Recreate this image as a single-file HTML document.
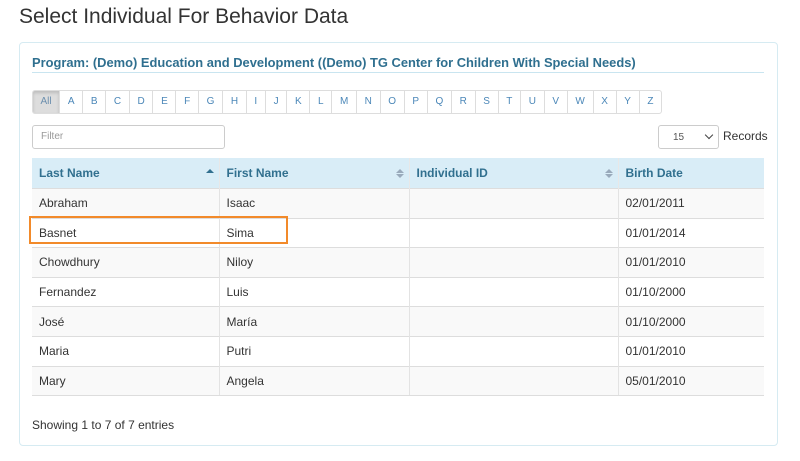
<!DOCTYPE html>
<html><head><meta charset="utf-8"><style>
body{margin:0;width:800px;height:461px;background:#fff;font-family:"Liberation Sans",Arial,sans-serif;color:#333;position:relative;overflow:hidden}
h1{position:absolute;left:19px;top:5px;margin:0;font-weight:normal;font-size:21px;color:#333}
.panel{position:absolute;left:19px;top:42px;width:757px;height:402px;border:1px solid #d6ebf2;border-radius:4px}
.ph{position:absolute;left:12px;top:12px;width:732px;height:17px;border-bottom:1px solid #c9e5f0;font-size:12.9px;font-weight:bold;color:#2f6f8f;white-space:nowrap}
.alpha{position:absolute;left:12px;top:47px;display:flex;height:22px;border:1px solid #ddd;border-radius:3px;overflow:hidden}
.alpha span{display:block;padding:0 7.7px;line-height:22px;font-size:10px;color:#4b87b8;border-left:1px solid #ddd}
.alpha span:first-child{border-left:none;background:#ddd;color:#6c8fae;box-shadow:inset 0 2px 3px rgba(0,0,0,.15);padding:0 7.5px}
.filter{position:absolute;left:12px;top:82px;width:183px;height:22px;border:1px solid #ccc;border-radius:3px;font-size:10px;color:#999;line-height:22px;padding-left:8px}
.sel{position:absolute;left:638px;top:82px;width:59px;height:22px;border:1px solid #ccc;border-radius:3px;font-size:10px;line-height:23px;color:#555}
.sel b{position:absolute;left:14px;font-weight:normal}
.sel i{position:absolute;right:6px;top:6px;width:5px;height:5px;border-right:1.5px solid #444;border-bottom:1.5px solid #444;transform:rotate(45deg)}
.rec{position:absolute;left:703px;top:86px;font-size:12px;color:#333}
table{position:absolute;left:12px;top:115px;border-collapse:collapse;font-size:12px;table-layout:fixed;width:732px}
th{background:#d9edf7;color:#31708f;text-align:left;height:30px;padding:0 7px;border-left:1px solid #e8e8e8;position:relative;font-weight:bold}
td{height:28.6px;padding:0 7px;border-left:1px solid #e3e3e3;border-top:1px solid #ddd;color:#333}
tr>*:first-child{border-left:none}
tbody tr:nth-child(odd) td{background:#f9f9f9}
tbody tr:last-child td{border-bottom:1px solid #ddd}
.s{position:absolute;right:9px;top:11px;width:0;height:0}
.s:before,.s:after{content:"";position:absolute;left:-4px;border-left:4px solid transparent;border-right:4px solid transparent}
.s:before{top:0;border-bottom:4px solid #9ab}
.s:after{top:5px;border-top:4px solid #9ab}
.up:before{border-bottom-color:#31708f}.up:after{display:none}
.hl{position:absolute;left:29px;top:216px;width:255px;height:24px;border:2px solid #f28a2a}
.show{position:absolute;left:12px;top:375px;font-size:12px}
</style></head><body>
<h1>Select Individual For Behavior Data</h1>
<div class="panel">
<div class="ph">Program: (Demo) Education and Development ((Demo) TG Center for Children With Special Needs)</div>
<div class="alpha"><span>All</span><span>A</span><span>B</span><span>C</span><span>D</span><span>E</span><span>F</span><span>G</span><span>H</span><span>I</span><span>J</span><span>K</span><span>L</span><span>M</span><span>N</span><span>O</span><span>P</span><span>Q</span><span>R</span><span>S</span><span>T</span><span>U</span><span>V</span><span>W</span><span>X</span><span>Y</span><span>Z</span></div>
<div class="filter">Filter</div>
<div class="sel"><b>15</b><i></i></div>
<div class="rec">Records</div>
<table>
<colgroup><col style="width:187px"><col style="width:190px"><col style="width:209px"><col style="width:146px"></colgroup>
<thead><tr><th>Last Name<span class="s up"></span></th><th>First Name<span class="s"></span></th><th>Individual ID<span class="s"></span></th><th>Birth Date</th></tr></thead>
<tbody>
<tr><td>Abraham</td><td>Isaac</td><td></td><td>02/01/2011</td></tr>
<tr><td>Basnet</td><td>Sima</td><td></td><td>01/01/2014</td></tr>
<tr><td>Chowdhury</td><td>Niloy</td><td></td><td>01/01/2010</td></tr>
<tr><td>Fernandez</td><td>Luis</td><td></td><td>01/10/2000</td></tr>
<tr><td>José</td><td>María</td><td></td><td>01/10/2000</td></tr>
<tr><td>Maria</td><td>Putri</td><td></td><td>01/01/2010</td></tr>
<tr><td>Mary</td><td>Angela</td><td></td><td>05/01/2010</td></tr>
</tbody></table>
<div class="show">Showing 1 to 7 of 7 entries</div>
</div>
<div class="hl"></div>
</body></html>
